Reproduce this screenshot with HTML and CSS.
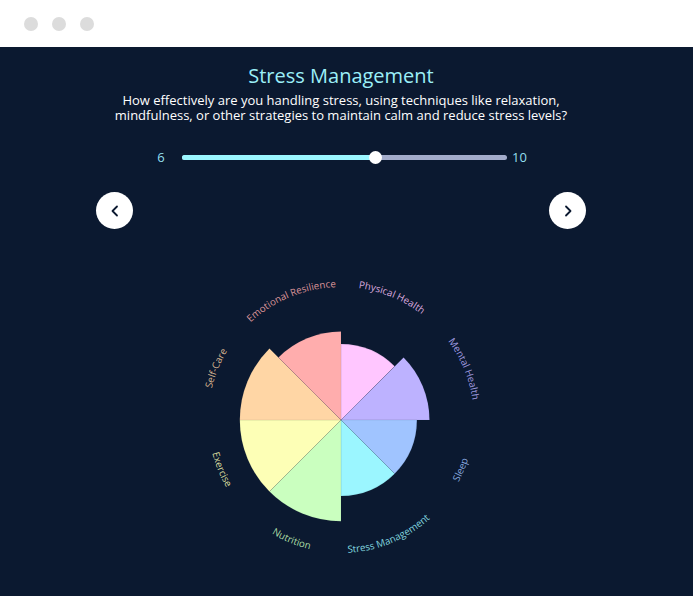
FILE: index.html
```html
<!DOCTYPE html>
<html lang="en">
<head>
<meta charset="utf-8">
<title>Stress Management</title>
<link rel="stylesheet" href="styles.css">
</head>
<body>
<div class="window">
  <header class="topbar">
    <span class="dot"></span><span class="dot"></span><span class="dot"></span>
  </header>
  <main class="stage">
    <h1 class="title">Stress Management</h1>
    <p class="question">How effectively are you handling stress, using techniques like relaxation,<br>mindfulness, or other strategies to maintain calm and reduce stress levels?</p>
    <div class="slider">
      <span class="slider-value">6</span>
      <div class="track">
        <div class="fill" style="width: 193px"></div>
        <span class="thumb" style="left: 193px"></span>
      </div>
      <span class="slider-max">10</span>
    </div>
    <div class="nav">
      <button class="nav-btn" aria-label="Previous">
        <svg width="16" height="16" viewBox="0 0 16 16"><path d="M10 3.5 L5.5 8 L10 12.5" fill="none" stroke="#0b1930" stroke-width="1.8" stroke-linecap="round" stroke-linejoin="round"/></svg>
      </button>
      <button class="nav-btn" aria-label="Next">
        <svg width="16" height="16" viewBox="0 0 16 16"><path d="M6 3.5 L10.5 8 L6 12.5" fill="none" stroke="#0b1930" stroke-width="1.8" stroke-linecap="round" stroke-linejoin="round"/></svg>
      </button>
    </div>
    <svg class="wheel" width="300" height="300" viewBox="0 0 300 300">
      <defs></defs>
      <g class="wedges">
        <path fill="#ffc6ff" d="M150 150 L150 74.1 A75.9 75.9 0 0 1 203.67 96.33 Z"/>
        <path fill="#bdb2ff" d="M150 150 L212.58 87.42 A88.5 88.5 0 0 1 238.5 150 Z"/>
        <path fill="#a0c4ff" d="M150 150 L225.9 150 A75.9 75.9 0 0 1 203.67 203.67 Z"/>
        <path fill="#9bf6ff" d="M150 150 L203.67 203.67 A75.9 75.9 0 0 1 150 225.9 Z"/>
        <path fill="#caffbf" d="M150 150 L150 251.2 A101.2 101.2 0 0 1 78.44 221.56 Z"/>
        <path fill="#fdffb6" d="M150 150 L78.44 221.56 A101.2 101.2 0 0 1 48.8 150 Z"/>
        <path fill="#ffd6a5" d="M150 150 L48.8 150 A101.2 101.2 0 0 1 78.44 78.44 Z"/>
        <path fill="#ffadad" d="M150 150 L87.42 87.42 A88.5 88.5 0 0 1 150 61.5 Z"/>
      </g>
      <g class="labels"></g>
    </svg>
  </main>
</div>
<script src="wheel.js"></script>
</body>
</html>
```
FILE: wheel.js
```js
(function () {
  var items = [
    ["Physical Health", "#ffc6ff"],
    ["Mental Health", "#bdb2ff"],
    ["Sleep", "#a0c4ff"],
    ["Stress Management", "#9bf6ff"],
    ["Nutrition", "#caffbf"],
    ["Exercise", "#fdffb6"],
    ["Self-Care", "#ffd6a5"],
    ["Emotional Resilience", "#ffadad"]
  ];
  var NS = "http://www.w3.org/2000/svg";
  var svg = document.querySelector(".wheel");
  var defs = svg.querySelector("defs");
  var g = svg.querySelector(".labels");
  var cx = 150, cy = 150, R = 133, span = 42;
  function pt(a) {
    var r = a * Math.PI / 180;
    return [cx + R * Math.sin(r), cy - R * Math.cos(r)];
  }
  items.forEach(function (it, i) {
    var mid = i * 45 + 22.5;
    var bottom = mid > 90 && mid < 270;
    var a0 = bottom ? mid + span : mid - span;
    var a1 = bottom ? mid - span : mid + span;
    var p0 = pt(a0), p1 = pt(a1);
    var path = document.createElementNS(NS, "path");
    var id = "arc" + i;
    path.setAttribute("id", id);
    path.setAttribute("d", "M " + p0[0].toFixed(2) + " " + p0[1].toFixed(2) +
      " A " + R + " " + R + " 0 0 " + (bottom ? 0 : 1) + " " + p1[0].toFixed(2) + " " + p1[1].toFixed(2));
    defs.appendChild(path);
    var t = document.createElementNS(NS, "text");
    t.setAttribute("class", "label");
    t.setAttribute("fill", it[1]);
    var tp = document.createElementNS(NS, "textPath");
    tp.setAttribute("href", "#" + id);
    tp.setAttribute("startOffset", "50%");
    tp.setAttribute("text-anchor", "middle");
    tp.textContent = it[0];
    t.appendChild(tp);
    g.appendChild(t);
  });
})();
```
FILE: styles.css
```css
* { box-sizing: border-box; }
html, body { margin: 0; padding: 0; }
body {
  width: 693px;
  height: 596px;
  overflow: hidden;
  background: #ffffff;
  font-family: "Open Sans", "Noto Sans", sans-serif;
}
.window {
  display: flex;
  flex-direction: column;
  height: 596px;
}
.topbar {
  height: 47px;
  flex: none;
  background: #ffffff;
  display: flex;
  align-items: center;
  gap: 14px;
  padding: 0 0 0 24px;
}
.dot {
  width: 14px;
  height: 14px;
  border-radius: 50%;
  background: #dcdcdc;
}
.stage {
  flex: 1;
  background: #0b1930;
  display: flex;
  flex-direction: column;
  align-items: center;
  padding: 17px 11px 0 0;
}
.title {
  margin: 0;
  font-size: 20px;
  line-height: 24px;
  font-weight: 400;
  color: #9beff8;
}
.question {
  margin: 4.5px 0 0;
  font-size: 13px;
  line-height: 15px;
  color: #ffffff;
  text-align: center;
}
.slider {
  margin-top: 24.5px;
  height: 20px;
  display: flex;
  align-items: center;
  font-size: 13px;
  color: #93dfee;
}
.slider-value { width: 8px; text-align: center; }
.slider-max { width: 13px; text-align: center; }
.track {
  position: relative;
  width: 325px;
  height: 5px;
  margin: 0 5px 0 17px;
  border-radius: 3px;
  background: #a3accb;
}
.fill {
  height: 5px;
  border-radius: 3px;
  background: #9bf6ff;
}
.thumb {
  position: absolute;
  top: -4px;
  width: 13px;
  height: 13px;
  margin-left: -6.5px;
  border-radius: 50%;
  background: #ffffff;
}
.nav {
  margin-top: 25px;
  width: 490px;
  display: flex;
  justify-content: space-between;
}
.nav-btn {
  width: 37px;
  height: 37px;
  border: none;
  border-radius: 50%;
  background: #ffffff;
  padding: 0;
  display: flex;
  align-items: center;
  justify-content: center;
}
.wheel {
  display: block;
  margin-top: 41px;
}
.wedges path {
  stroke: rgba(11, 25, 48, 0.12);
  stroke-width: 0.6;
}
.label {
  font-family: "Open Sans", "Noto Sans", sans-serif;
  font-size: 9.8px;
  fill-opacity: 0.85;
}
```
